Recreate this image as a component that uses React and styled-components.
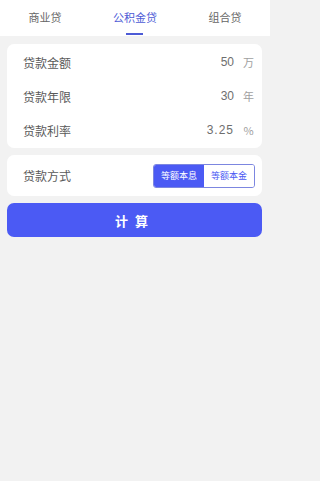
import React, { useState } from 'react';
import styled, { createGlobalStyle } from 'styled-components';

const BLUE = '#4b5af4';

const GlobalStyle = createGlobalStyle`
  html, body {
    margin: 0;
    padding: 0;
    background: #f2f2f2;
    font-family: "Noto Sans CJK SC", "Noto Sans", sans-serif;
  }
`;

const Page = styled.div`
  width: 270px;
  min-height: 481px;
  background: #f2f2f2;
`;

const TabBar = styled.div`
  display: grid;
  grid-template-columns: repeat(3, 1fr);
  height: 36px;
  background: #fff;
`;

const Tab = styled.div`
  position: relative;
  display: flex;
  justify-content: center;
  padding-top: 10px;
  font-size: 11px;
  line-height: 14px;
  color: ${p => (p.$active ? '#4d5bd6' : '#666')};
  cursor: pointer;

  &::after {
    content: '';
    display: ${p => (p.$active ? 'block' : 'none')};
    position: absolute;
    left: 50%;
    bottom: 1px;
    width: 17px;
    height: 2px;
    margin-left: -9px;
    background: #4d5bd6;
  }
`;

const Body = styled.div`
  display: flex;
  flex-direction: column;
  gap: 7px;
  padding: 8px 8px 0 7px;
`;

const Card = styled.div`
  background: #fff;
  border-radius: 7px;
  padding: ${p => p.$pad || '1px 8px 1px 16px'};
`;

const Row = styled.div`
  display: flex;
  align-items: center;
  height: ${p => p.$h || 34}px;
`;

const Label = styled.div`
  flex: 1;
  font-size: 12px;
  color: #5a5a5a;
`;

const Value = styled.div`
  font-family: "Liberation Sans", Arial, sans-serif;
  font-size: 12px;
  color: #6e6e6e;
  letter-spacing: ${p => (p.$spaced ? '1px' : '0')};
`;

const Unit = styled.div`
  width: 11px;
  margin-left: 9px;
  text-align: center;
  font-size: 11px;
  color: #a0a0a0;
`;

const Segmented = styled.div`
  display: flex;
  border: 1px solid #7c86e0;
  border-radius: 3px;
  overflow: hidden;
`;

const Seg = styled.div`
  width: 50px;
  height: 22px;
  display: flex;
  align-items: center;
  justify-content: center;
  font-size: 9px;
  background: ${p => (p.$active ? BLUE : '#fff')};
  color: ${p => (p.$active ? '#fff' : BLUE)};
`;

const CalcButton = styled.button`
  height: 34px;
  border: none;
  border-radius: 7px;
  background: ${BLUE};
  color: #fff;
  font-family: "Noto Sans CJK SC", sans-serif;
  font-size: 13px;
  font-weight: bold;
  letter-spacing: 7px;
  padding-left: 7px;
  cursor: pointer;
`;

const tabs = ['商业贷', '公积金贷', '组合贷'];

const rows = [
  { label: '贷款金额', value: '50', unit: '万' },
  { label: '贷款年限', value: '30', unit: '年' },
  { label: '贷款利率', value: '3.25', unit: '%', spaced: true },
];

export default function App() {
  const [tab, setTab] = useState(1);
  const [mode, setMode] = useState(0);

  return (
    <Page>
      <GlobalStyle />
      <TabBar>
        {tabs.map((t, i) => (
          <Tab key={t} $active={tab === i} onClick={() => setTab(i)}>
            {t}
          </Tab>
        ))}
      </TabBar>
      <Body>
        <Card>
          {rows.map(r => (
            <Row key={r.label}>
              <Label>{r.label}</Label>
              <Value $spaced={r.spaced}>{r.value}</Value>
              <Unit>{r.unit}</Unit>
            </Row>
          ))}
        </Card>
        <Card $pad="0 7px 0 16px">
          <Row $h={41}>
            <Label>贷款方式</Label>
            <Segmented>
              {['等额本息', '等额本金'].map((m, i) => (
                <Seg key={m} $active={mode === i} onClick={() => setMode(i)}>
                  {m}
                </Seg>
              ))}
            </Segmented>
          </Row>
        </Card>
        <CalcButton>计算</CalcButton>
      </Body>
    </Page>
  );
}
